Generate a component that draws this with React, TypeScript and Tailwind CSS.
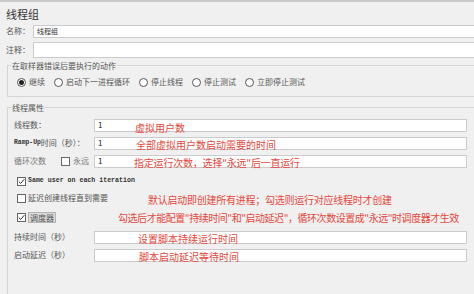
function Radio({ checked, label }: { checked?: boolean; label: string }) {
    return (
        <div className="flex items-center">
            <span className="w-[9px] h-[9px] rounded-full border border-[#555] bg-white flex items-center justify-center">
                {checked && <span className="w-[5px] h-[5px] rounded-full bg-[#222]"></span>}
            </span>
            <span className="ml-[3px] leading-[10px]">{label}</span>
        </div>
    );
}

function Check({ checked }: { checked?: boolean }) {
    return (
        <span className="w-[9px] h-[9px] shrink-0 border border-[#666] bg-white flex items-center justify-center">
            {checked && (
                <svg width="7" height="7" viewBox="0 0 7 7">
                    <path d="M0.8 3.6 L2.7 5.4 L6.3 1.2" stroke="#333" strokeWidth="1" fill="none" />
                </svg>
            )}
        </span>
    );
}

function Field({ value }: { value?: string }) {
    return (
        <div className="flex-1 h-[13px] bg-white border border-[#cbcbcb] flex items-center pl-[3px] text-[8px] text-[#222]">
            {value}
        </div>
    );
}

export default function App() {
    return (
        <div className="relative w-[474px] h-[294px] overflow-hidden bg-[#f0f0f0] border-t-2 border-[#c8c8c8] font-['Noto_Sans_CJK_SC',sans-serif] text-[#555]">
            <div className="mt-[2px] h-[20px] pl-[6px] flex items-center text-[11px] text-[#333]">线程组</div>

            <div className="h-[14px] pl-[6px] flex items-center">
                <span className="w-[27px] text-[8px]">名称：</span>
                <div className="flex-1 h-[13px] bg-white border border-r-0 border-[#cbcbcb] flex items-center pl-[3px] text-[7px] text-[#333]">线程组</div>
            </div>
            <div className="mt-[3px] h-[18px] pl-[6px] flex items-center">
                <span className="w-[27px] text-[8px]">注释：</span>
                <div className="flex-1 h-[16px] bg-white border border-r-0 border-[#cbcbcb]"></div>
            </div>

            <div className="relative mt-[6px] ml-[7px] h-[32px] border border-r-0 border-[#d4d4d4] pl-[9px] pt-[10px] text-[8px]">
                <span className="absolute -top-[6px] left-[3px] px-[1px] bg-[#f0f0f0] leading-[11px]">在取样器错误后要执行的动作</span>
                <div className="flex items-center gap-[9px] h-[12px]">
                    <Radio checked label="继续" />
                    <Radio label="启动下一进程循环" />
                    <Radio label="停止线程" />
                    <Radio label="停止测试" />
                    <Radio label="立即停止测试" />
                </div>
            </div>

            <div className="relative mt-[10px] ml-[7px] h-[200px] border border-r-0 border-[#d4d4d4] pt-[8px] pl-[6px] pr-[7px] text-[8px]">
                <span className="absolute -top-[6px] left-[3px] px-[1px] bg-[#f0f0f0] leading-[11px]">线程属性</span>

                <div className="h-[18px] flex items-center">
                    <span className="w-[80px]">线程数：</span>
                    <Field value="1" />
                </div>
                <div className="h-[18px] flex items-center">
                    <span className="w-[80px] flex items-center">
                        <span className="font-['Liberation_Mono',monospace] font-bold text-[6.4px] text-[#333]">Ramp-Up</span>
                        <span>时间（秒）：</span>
                    </span>
                    <Field value="1" />
                </div>
                <div className="h-[18px] flex items-center">
                    <span className="w-[80px] flex items-center">
                        <span className="w-[47px] text-[#777]">循环次数</span>
                        <Check />
                        <span className="ml-[3px] text-[#777]">永远</span>
                    </span>
                    <Field value="1" />
                </div>
                <div className="mt-[2px] h-[18px] pl-[3px] flex items-center">
                    <Check checked />
                    <span className="ml-[2px] font-['Liberation_Mono',monospace] font-bold text-[6.6px] text-[#333]">Same user on each iteration</span>
                </div>
                <div className="h-[16px] pl-[3px] flex items-center">
                    <Check />
                    <span className="ml-[2px]">延迟创建线程直到需要</span>
                </div>
                <div className="h-[22px] pl-[3px] flex items-center">
                    <Check checked />
                    <span className="ml-[2px] px-[1px] bg-[#dadada] border border-[#b4b4b4] leading-[9px]">调度器</span>
                </div>
                <div className="h-[18px] flex items-center">
                    <span className="w-[80px]">持续时间（秒）</span>
                    <Field />
                </div>
                <div className="h-[18px] flex items-center">
                    <span className="w-[80px]">启动延迟（秒）</span>
                    <Field />
                </div>
            </div>

            <div className="absolute left-[135px] top-[119px] text-[10px] leading-[14px] text-[#e4473b] whitespace-nowrap">虚拟用户数</div>
            <div className="absolute left-[136px] top-[136px] text-[10px] leading-[14px] text-[#e4473b] whitespace-nowrap">全部虚拟用户数启动需要的时间</div>
            <div className="absolute left-[134px] top-[154px] text-[10px] leading-[14px] tracking-[-0.2px] text-[#e4473b] whitespace-nowrap">指定运行次数，选择"永远"后一直运行</div>
            <div className="absolute left-[148px] top-[191px] text-[10px] leading-[14px] tracking-[-0.25px] text-[#e4473b] whitespace-nowrap">默认启动即创建所有进程；勾选则运行对应线程时才创建</div>
            <div className="absolute left-[118px] top-[209px] text-[10px] leading-[14px] tracking-[-0.45px] text-[#e4473b] whitespace-nowrap">勾选后才能配置"持续时间"和"启动延迟"，循环次数设置成"永远"时调度器才生效</div>
            <div className="absolute left-[138px] top-[230px] text-[10px] leading-[14px] text-[#e4473b] whitespace-nowrap">设置脚本持续运行时间</div>
            <div className="absolute left-[139px] top-[248px] text-[10px] leading-[14px] text-[#e4473b] whitespace-nowrap">脚本启动延迟等待时间</div>
        </div>
    );
}
